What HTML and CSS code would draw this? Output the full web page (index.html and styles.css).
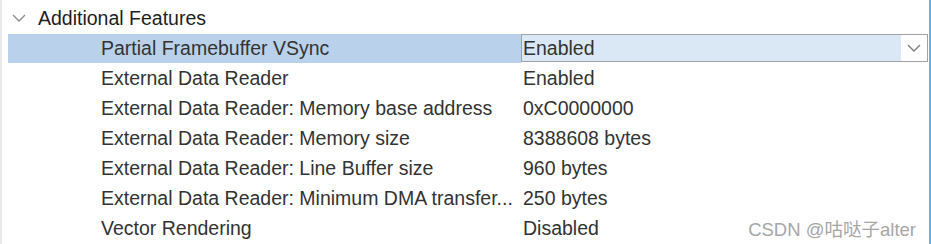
FILE: index.html
```html
<!DOCTYPE html>
<html>
<head>
<meta charset="utf-8">
<link rel="stylesheet" href="styles.css">
</head>
<body>
<div class="panel">
  <div class="group">
    <svg class="twisty" width="14" height="8" viewBox="0 0 14 8"><path d="M1 1 L7 7 L13 1" fill="none" stroke="#8a8a8a" stroke-width="1.3"/></svg>
    <span class="group-title">Additional Features</span>
  </div>
  <div class="row selected">
    <div class="label">Partial Framebuffer VSync</div>
    <div class="value">
      <div class="combo">
        <span class="combo-text">Enabled</span>
        <span class="combo-btn"><svg width="14" height="8" viewBox="0 0 14 8"><path d="M1 1 L7 7 L13 1" fill="none" stroke="#7a7a7a" stroke-width="1.3"/></svg></span>
      </div>
    </div>
  </div>
  <div class="row"><div class="label">External Data Reader</div><div class="value">Enabled</div></div>
  <div class="row"><div class="label">External Data Reader: Memory base address</div><div class="value">0xC0000000</div></div>
  <div class="row"><div class="label">External Data Reader: Memory size</div><div class="value">8388608 bytes</div></div>
  <div class="row"><div class="label">External Data Reader: Line Buffer size</div><div class="value">960 bytes</div></div>
  <div class="row"><div class="label">External Data Reader: Minimum DMA transfer...</div><div class="value">250 bytes</div></div>
  <div class="row"><div class="label">Vector Rendering</div><div class="value">Disabled</div><div class="watermark">CSDN @咕哒子alter</div></div>
</div>
</body>
</html>
```
FILE: styles.css
```css
html, body {
  margin: 0;
  padding: 0;
  background: #ffffff;
}
body {
  font-family: "Liberation Sans", Arial, "Noto Sans CJK SC", sans-serif;
  font-size: 19.5px;
  color: #333333;
}
.panel {
  box-sizing: border-box;
  width: 931px;
  height: 244px;
  border-left: 2px solid #e8e8e8;
  border-right: 2px solid #5cb6e2;
  overflow: hidden;
}
.group {
  height: 30px;
  margin-top: 3px;
  display: flex;
  align-items: center;
}
.twisty {
  margin-left: 10px;
  margin-right: 12px;
}
.group-title {
  color: #1e1e1e;
}
.row {
  position: relative;
  display: grid;
  grid-template-columns: 513px 1fr;
  height: 30px;
  margin-left: 6px;
  align-items: center;
}
.label {
  padding-left: 93px;
  white-space: nowrap;
}
.value {
  padding-left: 2px;
  white-space: nowrap;
}
.row.selected {
  align-items: stretch;
}
.row.selected .label {
  background: #b9d1ea;
  display: flex;
  align-items: center;
  margin: 1px 0 0 0;
}
.row.selected .value {
  padding-left: 0;
  padding-right: 1px;
  display: flex;
  align-items: center;
}
.combo {
  box-sizing: border-box;
  flex: 1;
  height: 28px;
  border: 1px solid #a2a2a2;
  background: #dae8f5;
  display: flex;
  align-items: center;
}
.combo-text {
  flex: 1;
  padding-left: 1px;
  color: #333333;
}
.combo-btn {
  width: 26px;
  height: 100%;
  background: #ffffff;
  display: flex;
  align-items: center;
  justify-content: center;
}
.watermark {
  position: absolute;
  right: 13px;
  top: 2px;
  font-size: 18.5px;
  color: #a6a6a6;
}
```
